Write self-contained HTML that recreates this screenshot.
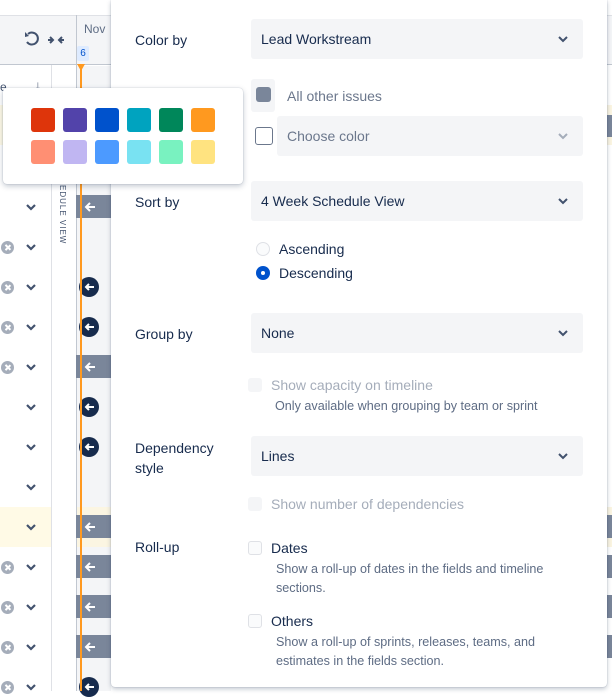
<!DOCTYPE html>
<html><head><meta charset="utf-8"><style>
*{box-sizing:border-box;margin:0;padding:0}
body{width:612px;height:691px;overflow:hidden;background:#fff;position:relative;font-family:"Liberation Sans",sans-serif;color:#172b4d}
.a{position:absolute}
.x{position:absolute;width:13px;height:13px;border-radius:50%;background:#a5adba}
.x:before,.x:after{content:"";position:absolute;left:6px;top:3px;width:1.6px;height:7px;background:#fff;transform:rotate(45deg)}
.x:after{transform:rotate(-45deg)}
.bar{position:absolute;left:76px;width:35px;height:23px;background:#7a869a}
.circ{position:absolute;left:79px;width:20px;height:20px;border-radius:50%;background:#172b4d}
.lbl{position:absolute;left:135px;font-size:14px;color:#172b4d}
.sel{position:absolute;left:251px;width:332px;height:40px;background:#f4f5f7;border-radius:3px;font-size:14px;color:#172b4d;padding:12px 10px;line-height:16px}
.sw{position:absolute;width:24px;height:24px;border-radius:3px}
.cb{position:absolute;width:14px;height:14px;border:1.5px solid #dfe1e6;border-radius:3px;background:#fafbfc}
.t{position:absolute;font-size:14px;line-height:16px}
.s{position:absolute;font-size:12.6px;color:#5e6c84;line-height:19px}
</style></head><body>
<div class="a" style="left:0;top:15px;width:612px;height:50px;background:#f4f5f7;border-top:1px solid #dfe1e6;border-bottom:1px solid #c1c7d0"></div>
<div class="a" style="left:76px;top:15px;width:1px;height:676px;background:#c1c7d0"></div>
<div class="a" style="left:51px;top:65px;width:1px;height:626px;background:#dfe1e6"></div>
<div class="a" style="left:77px;top:66px;width:34px;height:625px;background:#f4f5f7"></div>
<div class="a" style="left:84px;top:22px;font-size:12px;color:#5e6c84">Nov</div>
<div class="a" style="left:77px;top:46px;width:12px;height:15px;background:#deebff;border-radius:2px;font-size:10px;color:#0052cc;text-align:center;line-height:15px">6</div>
<svg class="a" style="left:23px;top:30px" width="46" height="20" viewBox="0 0 46 20"><path d="M5 4 A6 6 0 1 1 4 12" fill="none" stroke="#42526e" stroke-width="2"/><path d="M2 2 L6 6 L2 7Z" fill="#42526e"/><path d="M25 10h5M27 7l3 3-3 3M41 10h-5M39 7l-3 3 3 3" fill="none" stroke="#42526e" stroke-width="2"/></svg>
<div class="a" style="left:0;top:80px;font-size:12px;color:#42526e">e</div>
<div class="a" style="left:35px;top:78px;font-size:12px;color:#42526e">↓</div>
<div class="a" style="left:0;top:105px;width:51px;height:40px;background:#fffae6"></div>
<div class="a" style="left:0;top:507px;width:51px;height:40px;background:#fffae6"></div>
<div class="a" style="left:77px;top:507px;width:34px;height:40px;background:#fbf5e2"></div>
<div class="a" style="left:606px;top:105px;width:6px;height:40px;background:#fbf5e2"></div>
<div class="a" style="left:606px;top:507px;width:6px;height:40px;background:#fbf5e2"></div>
<div class="a" style="left:606px;top:115px;width:6px;height:22px;background:#7a869a"></div>
<div class="a" style="left:606px;top:515px;width:6px;height:23px;background:#7a869a"></div>
<div class="a" style="left:606px;top:555px;width:6px;height:23px;background:#7a869a"></div>
<div class="a" style="left:606px;top:595px;width:6px;height:23px;background:#7a869a"></div>
<div class="a" style="left:606px;top:635px;width:6px;height:23px;background:#7a869a"></div>
<div class="bar" style="top:195px"></div><div class="bar" style="top:355px"></div>
<div class="bar" style="top:515px"></div><div class="bar" style="top:555px"></div>
<div class="bar" style="top:595px"></div><div class="bar" style="top:635px"></div>
<div class="circ" style="top:277px"></div><div class="circ" style="top:317px"></div>
<div class="circ" style="top:397px"></div><div class="circ" style="top:437px"></div>
<div class="circ" style="top:677px"></div>
<svg class="a" style="left:0;top:0" width="111" height="691">
<g fill="none" stroke="#fff" stroke-width="2">
<path d="M95 207h-9M90 203l-4 4 4 4"/><path d="M95 367h-9M90 363l-4 4 4 4"/>
<path d="M95 527h-9M90 523l-4 4 4 4"/><path d="M95 567h-9M90 563l-4 4 4 4"/>
<path d="M95 607h-9M90 603l-4 4 4 4"/><path d="M95 647h-9M90 643l-4 4 4 4"/>
<path d="M94 287h-8M89 284l-3 3 3 3"/><path d="M94 327h-8M89 324l-3 3 3 3"/>
<path d="M94 407h-8M89 404l-3 3 3 3"/><path d="M94 447h-8M89 444l-3 3 3 3"/>
<path d="M94 687h-8M89 684l-3 3 3 3"/>
</g>
<g fill="none" stroke="#42526e" stroke-width="2.2">
<path d="M27 205l4 4 4-4"/><path d="M27 245l4 4 4-4"/><path d="M27 285l4 4 4-4"/><path d="M27 325l4 4 4-4"/><path d="M27 365l4 4 4-4"/><path d="M27 405l4 4 4-4"/><path d="M27 445l4 4 4-4"/><path d="M27 485l4 4 4-4"/><path d="M27 525l4 4 4-4"/><path d="M27 565l4 4 4-4"/><path d="M27 605l4 4 4-4"/><path d="M27 645l4 4 4-4"/><path d="M27 685l4 4 4-4"/>
</g>
<rect x="80" y="64" width="2" height="627" fill="#ff991f"/>
<path d="M77 64h8l-4 7z" fill="#ff991f"/>
</svg>
<div class="x" style="left:1px;top:241px"></div><div class="x" style="left:1px;top:281px"></div>
<div class="x" style="left:1px;top:321px"></div><div class="x" style="left:1px;top:361px"></div>
<div class="x" style="left:1px;top:561px"></div><div class="x" style="left:1px;top:601px"></div>
<div class="x" style="left:1px;top:641px"></div><div class="x" style="left:1px;top:681px"></div>
<div class="a" style="left:58px;top:185px;font-size:8px;color:#42526e;writing-mode:vertical-rl;letter-spacing:1px">EDULE VIEW</div>
<div class="a" style="left:111px;top:0;width:496px;height:687px;background:#fff;border-radius:0 0 4px 4px;box-shadow:0 2px 5px rgba(9,30,66,.25),0 0 1px rgba(9,30,66,.3)"></div>
<div class="lbl" style="top:32px">Color by</div>
<div class="sel" style="top:19px">Lead Workstream</div>
<div class="a" style="left:251px;top:79px;width:24px;height:33px;background:#f4f5f7;border-radius:3px"></div>
<div class="a" style="left:256px;top:87px;width:15px;height:15px;background:#7a869a;border-radius:3px"></div>
<div class="t" style="left:287px;top:88px;color:#6b778c">All other issues</div>
<div class="a" style="left:255px;top:127px;width:18px;height:18px;border:1.5px solid #6b778c;border-radius:3px"></div>
<div class="sel" style="top:116px;left:277px;width:306px;color:#6b778c">Choose color</div>
<div class="lbl" style="top:194px">Sort by</div>
<div class="sel" style="top:181px">4 Week Schedule View</div>
<div class="a" style="left:256px;top:242px;width:14px;height:14px;border-radius:50%;border:1.5px solid #dfe1e6;background:#fafbfc"></div>
<div class="t" style="left:279px;top:241px">Ascending</div>
<div class="a" style="left:256px;top:266px;width:14px;height:14px;border-radius:50%;background:#0052cc"></div>
<div class="a" style="left:261px;top:271px;width:4px;height:4px;border-radius:50%;background:#fff"></div>
<div class="t" style="left:279px;top:265px">Descending</div>
<div class="lbl" style="top:326px">Group by</div>
<div class="sel" style="top:313px">None</div>
<div class="cb" style="left:248px;top:378px;background:#f4f5f7;border-color:#f4f5f7"></div>
<div class="t" style="left:271px;top:377px;color:#a5adba">Show capacity on timeline</div>
<div class="s" style="left:275px;top:397px">Only available when grouping by team or sprint</div>
<div class="lbl" style="top:438px;line-height:20px">Dependency<br>style</div>
<div class="sel" style="top:436px">Lines</div>
<div class="cb" style="left:248px;top:497px;background:#f4f5f7;border-color:#f4f5f7"></div>
<div class="t" style="left:271px;top:496px;color:#a5adba">Show number of dependencies</div>
<div class="lbl" style="top:539px">Roll-up</div>
<div class="cb" style="left:248px;top:541px"></div>
<div class="t" style="left:271px;top:540px">Dates</div>
<div class="s" style="left:276px;top:560px">Show a roll-up of dates in the fields and timeline<br>sections.</div>
<div class="cb" style="left:248px;top:614px"></div>
<div class="t" style="left:271px;top:613px">Others</div>
<div class="s" style="left:276px;top:633px">Show a roll-up of sprints, releases, teams, and<br>estimates in the fields section.</div>
<svg class="a" style="left:0;top:0" width="612" height="691"><g fill="none" stroke="#42526e" stroke-width="2"><path d="M559 37l4 4 4-4"/><path d="M559 199l4 4 4-4"/><path d="M559 331l4 4 4-4"/><path d="M559 454l4 4 4-4"/></g><path d="M559 134l4 4 4-4" fill="none" stroke="#a5adba" stroke-width="2"/></svg>
<div class="a" style="left:3px;top:88px;width:240px;height:96px;background:#fff;border-radius:4px;box-shadow:0 2px 6px rgba(9,30,66,.25),0 0 1px rgba(9,30,66,.3)"></div>
<div class="sw" style="left:31px;top:108px;background:#de350b"></div>
<div class="sw" style="left:63px;top:108px;background:#5243aa"></div>
<div class="sw" style="left:95px;top:108px;background:#0052cc"></div>
<div class="sw" style="left:127px;top:108px;background:#00a3bf"></div>
<div class="sw" style="left:159px;top:108px;background:#00875a"></div>
<div class="sw" style="left:191px;top:108px;background:#ff991f"></div>
<div class="sw" style="left:31px;top:140px;background:#ff8f73"></div>
<div class="sw" style="left:63px;top:140px;background:#c0b6f2"></div>
<div class="sw" style="left:95px;top:140px;background:#4c9aff"></div>
<div class="sw" style="left:127px;top:140px;background:#79e2f2"></div>
<div class="sw" style="left:159px;top:140px;background:#79f2c0"></div>
<div class="sw" style="left:191px;top:140px;background:#ffe380"></div>
</body></html>
